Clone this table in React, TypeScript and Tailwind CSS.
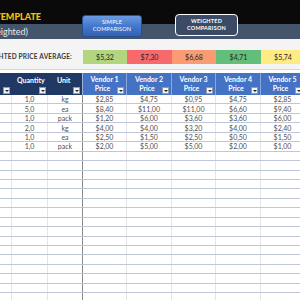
import React from "react";

const GRID = "grid grid-cols-[12px_36px_35px_44px_45px_44px_45px_44px]";

function Drop() {
  return (
    <div className="absolute bottom-[1px] right-[2px] w-[7px] h-[7px] bg-[#f3f3f3] border border-[#9a9a9a] flex items-center justify-center">
      <div className="w-0 h-0 border-l-[2px] border-r-[2px] border-t-[2px] border-l-transparent border-r-transparent border-t-[#222]" />
    </div>
  );
}

const rows = [
  ["1,0", "kg", "$2,85", "$4,75", "$0,95", "$4,75", "$2,85"],
  ["5,0", "ea", "$8,40", "$11,00", "$11,00", "$6,60", "$9,40"],
  ["1,0", "pack", "$1,20", "$6,00", "$3,60", "$3,60", "$6,00"],
  ["2,0", "kg", "$4,00", "$4,00", "$3,20", "$4,00", "$2,40"],
  ["1,0", "ea", "$2,50", "$1,50", "$2,50", "$0,50", "$1,50"],
  ["1,0", "pack", "$2,00", "$5,00", "$5,00", "$2,00", "$1,00"],
];

const empty = Array.from({ length: 16 }, () => ["", "", "", "", "", "", ""]);

const avg = [
  { v: "$5,32", c: "bg-[#b2d580]" },
  { v: "$7,30", c: "bg-[#f8696b]" },
  { v: "$6,68", c: "bg-[#fa9b73]" },
  { v: "$4,71", c: "bg-[#63be7b]" },
  { v: "$5,74", c: "bg-[#ffeb84]" },
];

export default function App() {
  const all = [...rows, ...empty];
  return (
    <div className="w-[300px] h-[300px] overflow-hidden bg-white font-['Lato','Open_Sans',sans-serif]">
      {/* Title bands */}
      <div className="h-[39px] flex bg-[linear-gradient(to_bottom,#0a0a0a_0px,#0a0a0a_24px,#44546a_24px,#44546a_39px)]">
        <div className="w-[82px] shrink-0 flex flex-col">
          <div className="h-[24px] w-[41px] flex items-end justify-end overflow-hidden pb-[2px]">
            <span className="whitespace-nowrap text-[9px] leading-[10px] font-black text-[#f7c10a]">
              PRICE COMPARISON TEMPLATE
            </span>
          </div>
          <div className="h-[15px] w-[28px] flex items-center justify-end overflow-hidden">
            <span className="whitespace-nowrap text-[9px] leading-[10px] text-[#e4e9f1]">
              Comparison (Weighted)
            </span>
          </div>
        </div>
        <div className="mt-[15px] w-[60px] h-[22px] shrink-0 rounded-[3px] border border-[#2a4f8f] bg-[linear-gradient(to_bottom,#6b9be0,#4175cc_55%,#3262b3)] flex flex-col items-center justify-center text-[5.5px] leading-[7px] text-white tracking-[0.2px]">
          <span>SIMPLE</span>
          <span>COMPARISON</span>
        </div>
        <div className="ml-[33px] mt-[14px] w-[63px] h-[22px] shrink-0 rounded-[4px] border-[1.5px] border-white bg-[#3b4a65] flex flex-col items-center justify-center text-[5.5px] leading-[7px] font-bold text-white tracking-[0.2px]">
          <span>WEIGHTED</span>
          <span>COMPARISON</span>
        </div>
      </div>

      {/* Weighted average row */}
      <div className="h-[31px] bg-[#f4f4f4] border-b border-[#d6d6d6] pt-[11px]">
        <div className={GRID}>
          <div className="col-span-3 h-[14px] flex items-center justify-end pr-[11px] overflow-hidden">
            <span className="whitespace-nowrap text-[6.5px] font-bold tracking-[0.2px] text-[#3a3a3a]">
              WEIGHTED PRICE AVERAGE:
            </span>
          </div>
          {avg.map((a, i) => (
            <div
              key={i}
              className={`${a.c} h-[14px] flex items-center justify-center text-[7px] text-[#262626]`}
            >
              {a.v}
            </div>
          ))}
        </div>
      </div>

      <div className="h-[3px]" />

      {/* Header */}
      <div className={`${GRID} h-[22px]`}>
        <div className="relative bg-[#1f3864]">
          <div className="absolute bottom-[1px] left-[3px] w-[7px] h-[7px] bg-[#f3f3f3] border border-[#9a9a9a] flex items-center justify-center">
            <div className="w-0 h-0 border-l-[2px] border-r-[2px] border-t-[2px] border-l-transparent border-r-transparent border-t-[#222]" />
          </div>
        </div>
        <div className="relative bg-[#1f3864] text-white font-bold text-[7px] leading-[8px] pt-[3px] pl-[5px] overflow-hidden whitespace-nowrap">
          Quantity
          <Drop />
        </div>
        <div className="relative bg-[#1f3864] text-white font-bold text-[7px] leading-[8px] pt-[3px] pl-[9px] border-r border-[#9fb3d9]">
          Unit
          <Drop />
        </div>
        {[1, 2, 3, 4, 5].map((n) => (
          <div
            key={n}
            className="relative bg-[#4472c4] text-white font-bold text-[7px] leading-[9px] pt-[2px] flex flex-col items-center border-r border-[#8aa6db]"
          >
            <span className="whitespace-nowrap">Vendor {n}</span>
            <span className="pr-[4px]">Price</span>
            <Drop />
          </div>
        ))}
      </div>

      {/* Body */}
      <div>
        {all.map((r, i) => (
          <div key={i} className={`${GRID} h-[9.45px] border-b border-[#bfc6d8]`}>
            <div className="border-r border-[#e3e3ea]" />
            {r.map((c, j) => (
              <div
                key={j}
                className={`flex items-center justify-center text-[7px] leading-[8px] text-[#505050] ${
                  j === 1 ? "border-r border-[#8c8c8c]" : "border-r border-[#e3e3ea]"
                }`}
              >
                {c}
              </div>
            ))}
          </div>
        ))}
      </div>
    </div>
  );
}
